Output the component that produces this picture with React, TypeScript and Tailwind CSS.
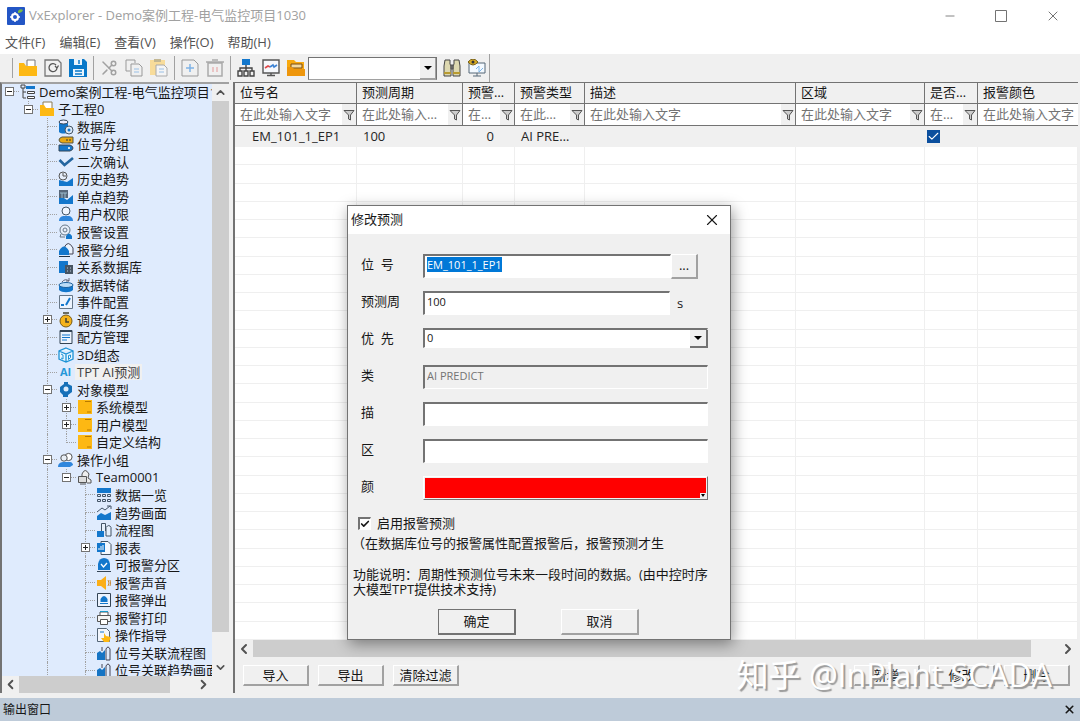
import React, { useEffect, useRef } from 'react';
import { Check, ChevronDown, ChevronLeft, ChevronRight, ChevronUp, Minus, Scissors, X } from 'lucide-react';

type TreeItem = {
  label: string;
  level: number;
  icon: React.ReactNode;
  toggle?: '+' | '-';
  last?: boolean;
  active?: boolean;
};

const folder = (
  <>
    <path d="M1 1h14v14H1z" fill="#fdb813" />
    <path d="M8 2.500h6M10 13h4" stroke="#b77900" />
  </>
);

const team = (
  <>
    <circle cx="10.5" cy="5" r="3.6" fill="#fff" stroke="#555" />
    <circle cx="6" cy="6" r="3.2" fill="#e8eef5" stroke="#555" />
    <path d="M0 15c0-4 3-5 6-5h6c2 0 3 2 3 3l-3 2z" fill="#2f86dc" />
  </>
);

const clip = (
  <>
    <path d="M1 15V8l3-2 2 2 3-3v10z" fill="#1574c4" />
    <path d="M6 6V2M10 15V4q2-4 4 0v11z" fill="none" stroke="#445" />
  </>
);

const treeItems: TreeItem[] = [
  {
    label: 'Demo案例工程-电气监控项目1030', level: 0, toggle: '-', last: true,
    icon: <><path d="M1 1h4v3H1zM3 4v10h3M3 8h3" fill="none" stroke="#444" /><path d="M6 2h9v3H6z" fill="#1377cc" /><path d="M7.500 7.500h7v2h-7zM7.500 12.500h7v2h-7z" fill="#fff" stroke="#444" /></>,
  },
  {
    label: '子工程0', level: 1, toggle: '-', last: true,
    icon: <><path d="M4 1h9v8H4z" fill="#fff" stroke="#8a7a50" /><path d="M1 4h4l2 3h8v8H1z" fill="#fdb813" /></>,
  },
  {
    label: '数据库', level: 2,
    icon: <><path d="M1 3v10c2 2 7 2 9 0V3z" fill="#1377cc" /><ellipse cx="5.500" cy="3" rx="4.500" ry="2" fill="#eef" stroke="#345" /><circle cx="11" cy="11" r="4" fill="#dce9f7" stroke="#456" /><circle cx="11" cy="11" r="1.500" fill="#1377cc" /></>,
  },
  {
    label: '位号分组', level: 2,
    icon: <><path d="M4 1h11v6H4Q1 6 1 4t3-3z" fill="#e8a813" stroke="#554" /><path d="M1 9h11q3 1 3 3t-3 3H1z" fill="#1377cc" stroke="#345" /><path d="M9 3v2M12 3v2" stroke="#333" /><circle cx="11" cy="12" r="1" fill="#fff" /></>,
  },
  { label: '二次确认', level: 2, icon: <path d="M1.500 6l5 5L15 4" fill="none" stroke="#23659f" strokeWidth="2.600" /> },
  {
    label: '历史趋势', level: 2,
    icon: <><path d="M1 15V9l4 1 4 1 6-4v8z" fill="#1377cc" /><circle cx="5" cy="5" r="4" fill="#e6eefa" stroke="#555" /><path d="M5 2v3h3" fill="none" stroke="#555" /></>,
  },
  {
    label: '单点趋势', level: 2,
    icon: <><path d="M1 15V7l5 2 3 2 6-5v9z" fill="#1377cc" /><path d="M1 1h9v8H1z" fill="#56677a" /><path d="M2 4h7M4 4v5M7 4v5" stroke="#9bc" /></>,
  },
  {
    label: '用户权限', level: 2,
    icon: <><circle cx="8" cy="5" r="4" fill="#f0f6ff" stroke="#456" /><path d="M1 15c0-4 3-5 5-5h4c3 0 5 2 5 5z" fill="#2f86dc" /></>,
  },
  {
    label: '报警设置', level: 2,
    icon: <><circle cx="7" cy="6" r="5" fill="#e6eefa" stroke="#678" /><circle cx="7" cy="6" r="2" fill="none" stroke="#678" /><path d="M8 15v-3q3-5 6 0v3z" fill="#1377cc" /><path d="M3 10l-1 3h5" fill="none" stroke="#678" /></>,
  },
  {
    label: '报警分组', level: 2,
    icon: <><path d="M6 12V6q4-9 9 0v6z" fill="#eaf2fd" stroke="#445" /><path d="M1 13V9q5-9 10 0v4z" fill="#1377cc" /><path d="M1 14.500h11" stroke="#234" /></>,
  },
  {
    label: '关系数据库', level: 2,
    icon: <><path d="M1 2h9v12H1z" fill="#1377cc" /><path d="M7 6h8v9H7z" fill="#475563" /><path d="M9 9h1M12 9h1M9 12h1M12 12h1" stroke="#bcd" /></>,
  },
  {
    label: '数据转储', level: 2,
    icon: <><path d="M1 8v5c3 3 11 3 14 0V8z" fill="#1377cc" /><ellipse cx="8" cy="8" rx="7" ry="2.500" fill="#bcdcf7" stroke="#1c629f" /><path d="M4 5q3-4 7-1M11 1v3H8" fill="none" stroke="#667" /></>,
  },
  {
    label: '事件配置', level: 2,
    icon: <><path d="M1.500 1.500h13v13h-13z" fill="#edf4fe" stroke="#678" /><path d="M3 11h3M8 11l4-7" stroke="#1377cc" strokeWidth="2" /></>,
  },
  {
    label: '调度任务', level: 2, toggle: '+',
    icon: <><circle cx="8" cy="9" r="6" fill="#f5b31b" stroke="#765a15" /><path d="M5 1h6M8 6v4h3" fill="none" stroke="#443" strokeWidth="1.500" /></>,
  },
  {
    label: '配方管理', level: 2,
    icon: <><path d="M2 1.500h12v13H2z" fill="#edf4fe" stroke="#345" /><path d="M2 2h12" stroke="#345" strokeWidth="2" /><path d="M4 6h8M4 8.500h8M4 11h5" stroke="#1377cc" /></>,
  },
  {
    label: '3D组态', level: 2,
    icon: <><path d="M8 1l7 3v8l-7 3-7-3V4zM1 4l7 3 7-3M8 7v8" fill="#e6f5ff" stroke="#1e93d6" strokeWidth="1.300" /><path d="M3 7l2 1v4l-2-1M10.500 8.500v4l2-2V8z" fill="none" stroke="#1e93d6" /></>,
  },
  {
    label: 'TPT AI预测', level: 2, active: true,
    icon: <text x="2" y="12" fontSize="11" fontWeight="700" fill="#2597d9" fontFamily="Open Sans, sans-serif">AI</text>,
  },
  {
    label: '对象模型', level: 2, toggle: '-',
    icon: <><path d="M6 0h4v2l4 2v6l-4 3v2H5v-2l-3-3V5l4-3z" fill="#1670b8" /><circle cx="8" cy="7" r="2.500" fill="#dcebfb" /></>,
  },
  { label: '系统模型', level: 3, toggle: '+', icon: folder },
  { label: '用户模型', level: 3, toggle: '+', icon: folder },
  { label: '自定义结构', level: 3, last: true, icon: folder },
  { label: '操作小组', level: 2, toggle: '-', icon: team },
  {
    label: 'Team0001', level: 3, toggle: '-', last: true,
    icon: <><path d="M5 7V5q3-7 7 0l-1 4 3 2v3h-4" fill="#eee" stroke="#555" /><path d="M1.500 7.500h8v6h-8zM3 15h6" fill="#ddd" stroke="#555" /></>,
  },
  {
    label: '数据一览', level: 4,
    icon: <><path d="M1 1h14v5H1z" fill="#1377cc" /><path d="M1.500 7.500h3v2h-3zM6.500 7.500h3v2h-3zM11.500 7.500h3v2h-3zM1.500 12.500h3v2h-3zM6.500 12.500h3v2h-3zM11.500 12.500h3v2h-3z" fill="none" stroke="#456" /></>,
  },
  {
    label: '趋势画面', level: 4,
    icon: <><path d="M1 15v-4l4-3 4 2 6-3v8z" fill="#1377cc" /><path d="M1 7l5-4 3 2 5-4M11 1h4v3" fill="none" stroke="#456" /></>,
  },
  {
    label: '流程图', level: 4,
    icon: <><path d="M5.500 9V1.500h4V9M10 5.500q3-4 5 0V14h-5z" fill="#e6f0fc" stroke="#456" /><path d="M1 9h7v6H1z" fill="#1377cc" /></>,
  },
  {
    label: '报表', level: 4, toggle: '+',
    icon: <><path d="M5 1.500h7l3 3v10H5z" fill="#f4f8fe" stroke="#456" /><path d="M1 3h8v9H1z" fill="#1377cc" /><path d="M3 10V8M5 10V6M7 10V5" stroke="#fff" /></>,
  },
  {
    label: '可报警分区', level: 4,
    icon: <><path d="M2 13V7q1-6 6-6t6 6v6z" fill="#1377cc" /><path d="M5 7l2.500 3L11 6" fill="none" stroke="#fff" strokeWidth="1.300" /><path d="M1 14.500h14" stroke="#345" /></>,
  },
  {
    label: '报警声音', level: 4,
    icon: <><path d="M1 5h4l5-4v14l-5-4H1z" fill="#fbae17" /><path d="M12 5q2 3 0 6M14 5q1 3 0 6" fill="none" stroke="#c98a31" /></>,
  },
  {
    label: '报警弹出', level: 4,
    icon: <><path d="M1.500 1.500h13v13h-13z" fill="#edf4fe" stroke="#345" /><path d="M4.500 10V7q3.500-6 7 0v3z" fill="#1377cc" /><path d="M4 11.500h8" stroke="#1377cc" /></>,
  },
  {
    label: '报警打印', level: 4,
    icon: <><path d="M1.500 5.500h13v6h-13z" fill="#f3f3f3" stroke="#555" /><path d="M4 5V2h8v3M4.500 9.500h7v5h-7z" fill="#fff" stroke="#555" /><path d="M4 1.500h8" stroke="#1799c9" /></>,
  },
  {
    label: '操作指导', level: 4,
    icon: <><path d="M1.500 1.500h9l3 3v10h-12z" fill="#f2f6fd" stroke="#567" /><path d="M4 5h4" stroke="#1377cc" /><path d="M8 6l2 3 5 1-2 5H8l-3-4h3z" fill="#fdb813" /></>,
  },
  { label: '位号关联流程图', level: 4, icon: clip },
  { label: '位号关联趋势画面', level: 4, icon: clip },
];

const TreeRow: React.FC<{ item: TreeItem }> = ({ item }) => (
  <li className="flex min-h-0 flex-1 items-center whitespace-nowrap">
    {Array.from({ length: item.level + 1 }, (_, col) => {
      const own = col === item.level;
      const line = own ? item.level > 0 : col === 2;
      return (
        <span key={col} className="relative flex w-[19px] shrink-0 self-stretch pl-[9px]">
          <span className="flex flex-1 flex-col">
            <span className={`flex-1 border-dotted border-neutral-400 ${line ? 'border-l' : ''} ${own ? 'border-b' : ''}`} />
            <span className={`flex-1 border-dotted border-neutral-400 ${line && !(own && item.last) ? 'border-l' : ''}`} />
          </span>
          {own && item.toggle && (
            <button aria-label={`展开 ${item.label}`} className="absolute inset-0 m-auto flex h-[9px] w-[9px] items-center justify-center border border-neutral-500 bg-white">
              <svg viewBox="0 0 7 7" className="h-[7px] w-[7px] shrink-0">
                <path d={item.toggle === '+' ? 'M1 3.500h5M3.500 1v5' : 'M1 3.500h5'} stroke="#222" />
              </svg>
            </button>
          )}
        </span>
      );
    })}
    <svg viewBox="0 0 16 16" className="ml-px h-4 w-4 shrink-0">{item.icon}</svg>
    <span className={`ml-px px-0.5 leading-4 ${item.active ? 'bg-[#f0f0f0] text-neutral-700' : ''}`}>{item.label}</span>
  </li>
);

const ToolButton: React.FC<{ label: string; children: React.ReactNode }> = ({ label, children }) => (
  <button aria-label={label} className="h-[18px] w-[18px] shrink-0">
    <svg viewBox="0 0 18 18" className="h-[18px] w-[18px]" fill="none">{children}</svg>
  </button>
);

const Divider = () => <span className="h-6 w-px shrink-0 bg-neutral-400" />;

const Toolbar = () => (
  <div className="flex h-[28px] shrink-0 bg-[#f0f0f0]">
    <div className="flex items-center gap-[6px] border-r border-neutral-400 pr-[3px]">
      <span className="ml-[12px] h-5 w-px bg-neutral-400" />
      <div className="flex items-center gap-[7px]">
        <ToolButton label="打开">
          <path d="M8 1h8v9H8z" fill="#fff" stroke="#777" />
          <path d="M0 4h5l2 3h11v10H0z" fill="#fdb813" />
        </ToolButton>
        <ToolButton label="刷新">
          <path d="M1 1h13l3 3v13H1z" stroke="#777" strokeWidth="1.300" />
          <path d="M13 9a4 4 0 1 1-1-3M13 9l-2-2M13 9l1.500-2.500" stroke="#555" strokeWidth="1.300" />
        </ToolButton>
        <ToolButton label="保存">
          <path d="M0 0h15l3 3v15H0z" fill="#0878c9" />
          <path d="M5 0h8v6H5zM4 10h11v7H4z" fill="#e9f4fd" />
          <path d="M10 1v4M6 12h7M6 15h7" stroke="#0878c9" strokeWidth="1.500" />
        </ToolButton>
      </div>
      <Divider />
      <div className="flex items-center gap-[7px]">
        <button aria-label="剪切" className="h-[18px] w-[18px]"><Scissors className="h-[18px] w-[18px] -scale-x-100 text-neutral-400" /></button>
        <ToolButton label="复制">
          <path d="M10 4V1H1v11h4M6 5h8l3 3v9H6z" stroke="#999" />
          <path d="M9 10h5M9 13h5" stroke="#9ac0e6" />
        </ToolButton>
        <ToolButton label="粘贴">
          <path d="M0 1h15v15H0z" fill="#f8dc9a" />
          <path d="M4 0h7v3H4z" fill="#c3b792" />
          <path d="M6 6h8l3 3v8H6z" fill="#f5f5f5" stroke="#aaa" />
          <path d="M9 10h5M9 13h5" stroke="#9ac0e6" />
        </ToolButton>
      </div>
      <Divider />
      <div className="flex items-center gap-[7px]">
        <ToolButton label="新建">
          <path d="M1 1h12l4 4v12H1z" stroke="#999" />
          <path d="M9 5v8M5 9h8" stroke="#7fb2e5" strokeWidth="1.500" />
        </ToolButton>
        <ToolButton label="删除项">
          <path d="M2 4h14v13H2zM0 3h18M6 1h6" stroke="#aaa" strokeWidth="1.500" />
          <path d="M7 8v5M11 8v5" stroke="#e59a9a" />
        </ToolButton>
      </div>
      <Divider />
      <div className="flex items-center gap-[7px]">
        <ToolButton label="网络">
          <path d="M5 0h8v6H5z" fill="#1377cc" />
          <path d="M9 6v6M3 12V9h12v3M1 12h4v5H1zM7 12h4v5H7zM13 12h4v5h-4z" stroke="#444" strokeWidth="1.400" />
        </ToolButton>
        <ToolButton label="监视">
          <path d="M1 1h16v13H1z" fill="#f6f8fc" stroke="#555" strokeWidth="1.400" />
          <path d="M9 14v2M5 16.500h8" stroke="#555" strokeWidth="1.400" />
          <path d="M3 9l3-2 2 1" stroke="#e04848" strokeWidth="1.600" />
          <path d="M8 8l3-2 1 2 3-2" stroke="#3c82d4" strokeWidth="1.600" />
        </ToolButton>
        <ToolButton label="工程">
          <path d="M0 1h7l2 2h8v14H0z" fill="#f8a90f" />
          <path d="M4 5h11v4H4z" fill="#f3d9a0" stroke="#7a4d12" />
          <path d="M0 8h5l2 2h11v7H0z" fill="#ee960c" />
        </ToolButton>
      </div>
      <div className="relative -ml-[3px] h-[23px] w-[129px]">
        <select aria-label="查找内容" className="h-full w-full appearance-none border border-t-neutral-500 border-r-neutral-500 border-b-neutral-400 border-l-neutral-500 bg-white" />
        <span className="pointer-events-none absolute top-px right-px bottom-px flex w-4 items-center justify-center border-r border-b border-neutral-400 bg-[#f0f0f0]">
          <svg viewBox="0 0 8 4" className="h-1 w-2"><path d="M0 0h8L4 4z" /></svg>
        </span>
      </div>
      <div className="flex items-center gap-[7px]">
        <ToolButton label="查找">
          <path d="M2 1h5v4l1 2v10H1V7zM11 1h5l1 6v10h-7V7l1-2z" fill="#ddd8b0" stroke="#444" />
          <path d="M8 6h2v4H8z" fill="#777" stroke="#555" />
          <path d="M1 14h7M10 14h7" stroke="#b89a30" strokeWidth="2" />
        </ToolButton>
        <ToolButton label="查看画面">
          <path d="M1 4h16v10H1zM9 14v3M5 17h8" fill="#f3f9ff" stroke="#567" />
          <path d="M8 10l3-3v6l4-4" stroke="#7db5e8" />
          <path d="M0 3q5-6 10 0-5 6-10 0" fill="#d6a91f" stroke="#76601a" />
          <circle cx="5" cy="3" r="1.500" fill="#333" />
        </ToolButton>
      </div>
    </div>
  </div>
);

const ProjectTree = () => (
  <aside className="flex w-[229px] shrink-0 flex-col border-t-2 border-l-2 border-t-neutral-400 border-l-neutral-500 bg-[#dfebfd]">
    <div className="flex min-h-0 flex-1">
      <div className="min-w-0 flex-1 overflow-hidden">
        <ul className="-mt-px -ml-0.5 flex h-[596px] flex-col">
          {treeItems.map((item) => <TreeRow key={item.label} item={item} />)}
        </ul>
      </div>
      <div className="flex w-[17px] flex-col items-center bg-[#f0f0f0] text-neutral-600">
        <ChevronUp className="my-0.5 h-[13px] w-[13px]" strokeWidth={3} />
        <span className="w-full grow-[20] basis-0 bg-[#cdcdcd]" />
        <span className="grow-[1] basis-0" />
        <ChevronDown className="my-0.5 h-[13px] w-[13px]" strokeWidth={3} />
      </div>
    </div>
    <div className="flex h-[17px] shrink-0 items-center bg-[#f0f0f0] pr-[17px] text-neutral-600">
      <ChevronLeft className="mx-px h-[15px] w-[15px]" strokeWidth={3} />
      <span className="h-full grow-[6] basis-0 bg-[#cdcdcd]" />
      <span className="grow basis-0" />
      <ChevronRight className="mx-px h-[15px] w-[15px]" strokeWidth={3} />
    </div>
  </aside>
);

const columns = [
  { name: '位号名', width: 'w-[122px]' },
  { name: '预测周期', width: 'w-[106px]' },
  { name: '预警优先级', width: 'w-[52px]' },
  { name: '预警类型', width: 'w-[70px]' },
  { name: '描述', width: 'w-[211px]' },
  { name: '区域', width: 'w-[129px]' },
  { name: '是否启用', width: 'w-[53px]' },
  { name: '报警颜色', width: '' },
];

const TagTable = () => (
  <table className="h-full w-full table-fixed border-separate border-spacing-0">
    <colgroup>
      {columns.map((c) => <col key={c.name} className={c.width} />)}
    </colgroup>
    <thead>
      <tr className="h-[21px] bg-[#f0f0f0]">
        {columns.map((c) => (
          <th key={c.name} className="truncate border-r border-b border-neutral-500 py-0 pr-0 pl-[5px] text-left font-normal last:border-r-0">{c.name}</th>
        ))}
      </tr>
      <tr className="h-[22px]">
        {columns.map((c, i) => (
          <td key={c.name} className="border-r border-b border-neutral-500 p-0 last:border-r-0">
            <div className="flex h-[21px] items-center pl-[5px]">
              <input aria-label={`筛选${c.name}`} placeholder="在此处输入文字" className="w-0 min-w-0 flex-1 text-ellipsis outline-none placeholder:text-neutral-500" />
              {i < columns.length - 1 && (
                <button aria-label={`${c.name}过滤器`} className="ml-1 flex h-full w-[14px] shrink-0 items-center justify-center bg-[#f0f0f0]">
                  <svg viewBox="0 0 12 12" className="h-3 w-3">
                    <path d="M1 1.500h10L7.500 6v5l-2-1V6z" fill="#ccc" stroke="#555" />
                  </svg>
                </button>
              )}
            </div>
          </td>
        ))}
      </tr>
    </thead>
    <tbody>
      <tr className="h-[21px] bg-[#f0f0f0] text-neutral-800">
        <td className="p-0 pl-[17px]">EM_101_1_EP1</td>
        <td className="p-0 pl-[6px]">100</td>
        <td className="p-0 pr-[21px] text-right">0</td>
        <td className="truncate p-0 pr-[8px] pl-[6px]">AI PREDICT</td>
        <td />
        <td />
        <td className="p-0 pl-[2px]">
          <label className="relative flex h-[13px] w-[13px]">
            <input type="checkbox" aria-label="启用" defaultChecked className="h-[13px] w-[13px] appearance-none bg-[#0b4f9e]" />
            <Check className="pointer-events-none absolute inset-0 h-[13px] w-[13px] text-white" />
          </label>
        </td>
        <td />
      </tr>
      {Array.from({ length: 27 }, (_, r) => (
        <tr key={r}>
          {columns.map((c) => <td key={c.name} className="border-r border-b border-[#efefef] p-0" />)}
        </tr>
      ))}
    </tbody>
  </table>
);

const raised = 'border-t border-l border-r-2 border-b-2 border-t-white border-l-white border-r-neutral-400 border-b-neutral-400 bg-[#f0f0f0]';
const sunken = 'border-t-2 border-l-2 border-r border-b border-t-neutral-500 border-l-neutral-500 border-r-white border-b-white';

const FlatButton: React.FC<{ children: string }> = ({ children }) => (
  <button className={`h-[21px] w-[66px] leading-4 ${raised}`}>{children}</button>
);

const Field: React.FC<{ id: string; label: string; children: React.ReactNode }> = ({ id, label, children }) => (
  <div className="flex h-6 items-start">
    <label htmlFor={id} className="w-[62px] shrink-0 leading-5 whitespace-pre">{label}</label>
    {children}
  </div>
);

const PredictDialog = () => {
  const tagRef = useRef<HTMLInputElement>(null);

  useEffect(() => {
    tagRef.current?.focus();
    tagRef.current?.select();
  }, []);

  return (
    <div role="dialog" aria-label="修改预测" className="absolute top-[205px] left-[347px] w-[384px] border border-neutral-500 bg-[#f0f0f0] shadow-[2px_4px_14px_rgba(0,0,0,0.4)]">
      <div className="flex h-7 items-center justify-between bg-white pr-[9px] pl-[3px]">
        <h2>修改预测</h2>
        <button aria-label="关闭对话框"><X className="h-[18px] w-[18px]" strokeWidth={1.5} /></button>
      </div>

      <div className="flex flex-col gap-[13px] pt-5 pr-[22px] pl-[13px]">
        <Field id="tag" label="位  号">
          <input id="tag" ref={tagRef} defaultValue="EM_101_1_EP1" className={`h-6 w-[248px] bg-white pb-1 pl-0.5 text-[11px] outline-none selection:bg-[#0078d7] selection:text-white ${sunken}`} />
          <button aria-label="选择位号" className={`h-[25px] w-[27px] ${raised}`}>...</button>
        </Field>
        <Field id="period" label="预测周">
          <input id="period" defaultValue="100" className={`h-6 w-[247px] bg-white pb-1 pl-0.5 text-[11px] ${sunken}`} />
          <span className="ml-[7px] self-center leading-5">s</span>
        </Field>
        <Field id="priority" label="优  先">
          <div className="relative h-5 flex-1">
            <select id="priority" className={`h-full w-full appearance-none bg-white pl-0.5 text-[11px] ${sunken}`}>
              <option>0</option>
            </select>
            <span className="pointer-events-none absolute top-0.5 right-0 bottom-0 flex w-[18px] items-center justify-center border-r-2 border-b-2 border-neutral-500 bg-[#f0f0f0]">
              <svg viewBox="0 0 8 4" className="h-1 w-2"><path d="M0 0h8L4 4z" /></svg>
            </span>
          </div>
        </Field>
        <Field id="kind" label="类">
          <input id="kind" disabled defaultValue="AI PREDICT" className={`h-6 min-w-0 flex-1 pb-1 pl-0.5 text-[11px] text-neutral-500 ${sunken}`} />
        </Field>
        <Field id="desc" label="描">
          <input id="desc" className={`h-6 min-w-0 flex-1 bg-white ${sunken}`} />
        </Field>
        <Field id="area" label="区">
          <input id="area" className={`h-6 min-w-0 flex-1 bg-white ${sunken}`} />
        </Field>
        <Field id="color" label="颜">
          <button id="color" className="flex h-6 flex-1 border border-t-white border-r-neutral-500 border-b-neutral-500 border-l-white p-px">
            <span className="flex h-full w-full items-end justify-end bg-[#ff0000]">
              <svg viewBox="0 0 6 5" className="h-[5px] w-[6px] bg-[#f0f0f0]"><path d="M1 1h4L3 4z" /></svg>
            </span>
          </button>
        </Field>
      </div>

      <div className="flex items-center gap-1.5 pt-[13px] pl-[10px]">
        <span className={`relative h-[13px] w-[13px] bg-white ${sunken}`}>
          <input id="enable" type="checkbox" defaultChecked className="absolute inset-0 appearance-none" />
          <Check className="pointer-events-none absolute inset-0 h-[10px] w-[10px]" strokeWidth={4} />
        </span>
        <label htmlFor="enable" className="leading-5">启用报警预测</label>
      </div>
      <p className="pl-1 leading-5">（在数据库位号的报警属性配置报警后，报警预测才生</p>
      <p className="mt-[14px] pr-3 pl-[5px] leading-[15px]">功能说明：周期性预测位号未来一段时间的数据。(由中控时序<br />大模型TPT提供技术支持)</p>

      <div className="mt-3 mb-1 flex gap-[45px] pl-[90px]">
        <button className="h-[26px] w-[78px] border border-r-2 border-b-2 border-neutral-500 bg-[#f0f0f0]">确定</button>
        <button className={`h-[26px] w-[78px] ${raised}`}>取消</button>
      </div>
    </div>
  );
};

const App: React.FC = () => {
  return (
    <div className="relative flex h-screen flex-col overflow-hidden bg-[#f0f0f0] font-['Open_Sans','Noto_Sans_CJK_SC',sans-serif] text-[13px] text-neutral-900">
      {/* Title bar */}
      <header className="flex h-[31px] shrink-0 items-center bg-white pl-[7px] text-neutral-500">
        <svg viewBox="0 0 18 18" className="h-[18px] w-[18px]">
          <rect width="18" height="18" rx="1" fill="#2356c5" />
          <circle cx="8" cy="10" r="3" fill="none" stroke="#fff" strokeWidth="2" />
          <path d="M8 5v2M8 13v2M3 10h2M11 10h2M5 7l1 1M10 12l1 1M5 13l1-1" stroke="#fff" strokeWidth="1.500" />
          <path d="M11 4q2-3 5-1-1 3-5 3z" fill="#79bc43" />
        </svg>
        <h1 className="ml-1 flex-1 text-neutral-400">VxExplorer - Demo案例工程-电气监控项目1030</h1>
        <div className="flex items-center gap-[37px] pr-[19px]">
          <button aria-label="最小化"><Minus className="h-[14px] w-[14px]" strokeWidth={1.5} /></button>
          <button aria-label="最大化">
            <svg viewBox="0 0 14 14" className="h-[14px] w-[14px]"><path d="M1.500 1.500h11v11h-11z" fill="none" stroke="currentColor" /></svg>
          </button>
          <button aria-label="关闭"><X className="h-4 w-4" strokeWidth={1.5} /></button>
        </div>
      </header>

      {/* Menu */}
      <nav className="flex h-[23px] shrink-0 items-center gap-[14px] bg-white pl-[5px] text-neutral-600">
        <button>文件(F)</button>
        <button>编辑(E)</button>
        <button>查看(V)</button>
        <button>操作(O)</button>
        <button>帮助(H)</button>
      </nav>

      <Toolbar />

      <main className="flex min-h-0 flex-1 gap-1">
        <ProjectTree />
        <section className="mr-0.5 flex min-w-0 flex-1 flex-col border-t border-l-2 border-neutral-500">
          <div className="min-h-0 flex-1 overflow-hidden bg-white">
            <TagTable />
          </div>
          <div className="flex h-[17px] shrink-0 items-center bg-[#f0f0f0] text-neutral-600">
            <ChevronLeft className="mx-px h-4 w-4" strokeWidth={3} />
            <span className="h-full flex-1 bg-[#cdcdcd]" />
            <ChevronRight className="mr-0.5 ml-[29px] h-4 w-4" strokeWidth={3} />
          </div>
          <div className="flex h-9 shrink-0 items-center gap-[9px] pr-2 pl-2">
            <FlatButton>导入</FlatButton>
            <FlatButton>导出</FlatButton>
            <FlatButton>清除过滤</FlatButton>
            <span className="flex-1" />
            <FlatButton>新增</FlatButton>
            <FlatButton>修改</FlatButton>
            <FlatButton>删除</FlatButton>
          </div>
        </section>
      </main>

      <footer className="mt-[5px] flex h-[23px] shrink-0 items-center justify-between bg-[#becbd9] pr-1 pl-[3px] text-xs">
        <span>输出窗口</span>
        <button aria-label="关闭输出窗口"><X className="h-[13px] w-[13px]" strokeWidth={3} /></button>
      </footer>

      <PredictDialog />

      <div className="pointer-events-none absolute right-[28px] bottom-[24px] text-[32px] leading-[44px] text-white [text-shadow:2px_2px_1px_#999]">知乎 @InPlant SCADA</div>
    </div>
  );
};

export default App;
